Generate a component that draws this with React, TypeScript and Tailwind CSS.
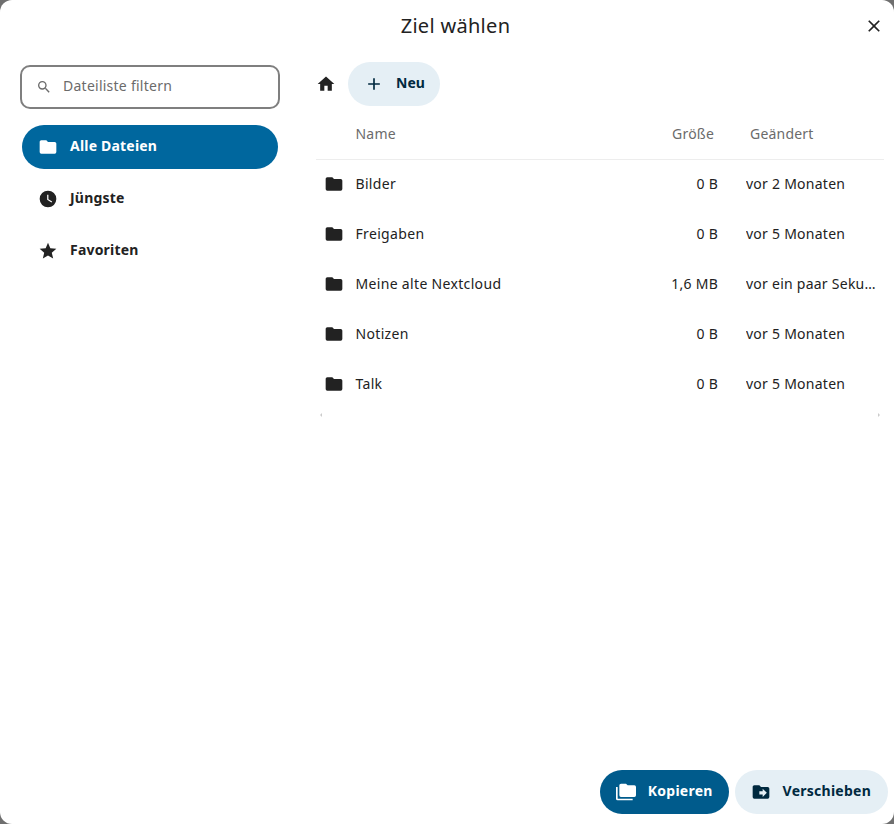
const FOLDER = "M10,4H4C2.89,4 2,4.89 2,6V18A2,2 0 0,0 4,20H20A2,2 0 0,0 22,18V8C22,6.89 21.1,6 20,6H12L10,4Z";
const CLOCK = "M12,2A10,10 0 0,0 2,12A10,10 0 0,0 12,22A10,10 0 0,0 22,12A10,10 0 0,0 12,2M16.2,16.2L11,13V7H12.5V12.2L17,14.9L16.2,16.2Z";
const STAR = "M12,17.27L18.18,21L16.54,13.97L22,9.24L14.81,8.62L12,2L9.19,8.62L2,9.24L7.45,13.97L5.82,21L12,17.27Z";
const HOME = "M10,20V14H14V20H19V12H22L12,3L2,12H5V20H10Z";
const PLUS = "M19,13H13V19H11V13H5V11H11V5H13V11H19V13Z";
const CLOSE = "M19,6.41L17.59,5L12,10.59L6.41,5L5,6.41L10.59,12L5,17.59L6.41,19L12,13.41L17.59,19L19,17.59L13.41,12L19,6.41Z";
const SEARCH = "M9.5,3A6.5,6.5 0 0,1 16,9.5C16,11.11 15.41,12.59 14.44,13.73L14.71,14H15.5L20.5,19L19,20.5L14,15.5V14.71L13.73,14.44C12.59,15.41 11.11,16 9.5,16A6.5,6.5 0 0,1 3,9.5A6.5,6.5 0 0,1 9.5,3M9.5,5C7,5 5,7 5,9.5C5,12 7,14 9.5,14C12,14 14,12 14,9.5C14,7 12,5 9.5,5Z";
const MULTI = "M22,4H14L12,2H6A2,2 0 0,0 4,4V16A2,2 0 0,0 6,18H22A2,2 0 0,0 24,16V6A2,2 0 0,0 22,4M2,6H0V20A2,2 0 0,0 2,22H20V20H2V6Z";
const MOVE = "M14,18V15H10V11H14V8L19,13M20,6H12L10,4H4C2.89,4 2,4.89 2,6V18A2,2 0 0,0 4,20H20A2,2 0 0,0 22,18V8C22,6.89 21.1,6 20,6Z";

function Icon({ d, size = 20, className = "" }: { d: string; size?: number; className?: string }) {
  return (
    <svg viewBox="0 0 24 24" width={size} height={size} fill="currentColor" className={`shrink-0 ${className}`}>
      <path d={d} />
    </svg>
  );
}

const rows = [
  ["Bilder", "0 B", "vor 2 Monaten"],
  ["Freigaben", "0 B", "vor 5 Monaten"],
  ["Meine alte Nextcloud", "1,6 MB", "vor ein paar Sekunden"],
  ["Notizen", "0 B", "vor 5 Monaten"],
  ["Talk", "0 B", "vor 5 Monaten"],
];

function NavItem({ d, label, active = false }: { d: string; label: string; active?: boolean }) {
  return (
    <div className={`flex h-11 items-center rounded-[22px] pl-4 ${active ? "bg-[#00679e] text-white" : "text-[#222222]"}`}>
      <Icon d={d} size={20} />
      <span className="ml-[12px] pb-[3px] text-[14px] font-bold tracking-[0.2px]">{label}</span>
    </div>
  );
}

export default function App() {
  return (
    <div className="h-[824px] w-[894px] overflow-hidden bg-[#6f6f6f] [font-family:'Noto_Sans',sans-serif]">
      <div className="flex h-full flex-col rounded-[12px] bg-white text-[#222222]">
        <header className="flex h-[52px] items-center pl-4 pr-[10px]">
          <h2 className="flex-1 pl-[31px] text-center text-[20px] leading-[52px] tracking-[0.3px]">Ziel wählen</h2>
          <Icon d={CLOSE} size={20} />
        </header>
        <div className="flex min-h-0 flex-1">
          <aside className="flex w-[300px] shrink-0 flex-col pl-5 pr-5 pt-[13px]">
            <div className="flex h-[44px] items-center rounded-[10px] border-2 border-[#7f7f7f] pl-[14px] text-[#6b6b6b]">
              <Icon d={SEARCH} size={16} />
              <span className="ml-[11px] pb-[3px] text-[14px] tracking-[0.25px]">Dateiliste filtern</span>
            </div>
            <nav className="mt-[16px] flex flex-col gap-2 px-[2px]">
              <NavItem d={FOLDER} label="Alle Dateien" active />
              <NavItem d={CLOCK} label="Jüngste" />
              <NavItem d={STAR} label="Favoriten" />
            </nav>
          </aside>
          <main className="min-w-0 flex-1 pr-[10px] pl-4">
            <div className="mt-[10px] flex h-11 items-center">
              <Icon d={HOME} size={20} />
              <div className="ml-[12px] flex h-11 items-center rounded-[22px] bg-[#e5eff5] pl-4 pr-[15px] text-[#00293f]">
                <Icon d={PLUS} size={20} />
                <span className="ml-[12px] pb-[3px] text-[14px] font-bold">Neu</span>
              </div>
            </div>
            <div className="grid h-[54px] grid-cols-[1fr_92px_138px] items-center border-b border-[#ededed] pt-px text-[14px] tracking-[0.2px] text-[#6b6b6b]">
              <span className="pl-[39.5px]">Name</span>
              <span className="pr-[32px] text-right">Größe</span>
              <span className="pl-[4px]">Geändert</span>
            </div>
            <div className="-mt-px">
              {rows.map(([name, size, date]) => (
                <div key={name} className="grid h-[50px] grid-cols-[1fr_92px_138px] items-center text-[14px] tracking-[0.25px]">
                  <div className="flex items-center pl-[8px]">
                    <Icon d={FOLDER} size={20} />
                    <span className="ml-[11.5px] pb-[2px] tracking-[0.33px]">{name}</span>
                  </div>
                  <span className="pr-[28px] pb-[2px] text-right">{size}</span>
                  <span className="truncate pr-[6px] pb-[2px]">{date}</span>
                </div>
              ))}
            </div>
            <div className="flex items-center justify-between px-1 pt-[4px]">
              <span className="h-0 w-0 border-y-[2px] border-r-[2px] border-y-transparent border-r-[#cccccc]" />
              <span className="h-0 w-0 border-y-[2px] border-l-[2px] border-y-transparent border-l-[#cccccc]" />
            </div>
          </main>
        </div>
        <footer className="flex justify-end gap-[6px] pr-[6px] pb-[10px]">
          <div className="flex h-11 items-center rounded-[22px] bg-[#005b8c] pl-4 pr-4 text-white">
            <Icon d={MULTI} size={20} />
            <span className="ml-[12px] pb-[3px] text-[14px] font-bold tracking-[0.25px]">Kopieren</span>
          </div>
          <div className="flex h-11 items-center rounded-[22px] bg-[#e5eff5] pl-4 pr-[17px] text-[#00293f]">
            <Icon d={MOVE} size={20} />
            <span className="ml-[12px] pb-[3px] text-[14px] font-bold tracking-[0.25px]">Verschieben</span>
          </div>
        </footer>
      </div>
    </div>
  );
}
